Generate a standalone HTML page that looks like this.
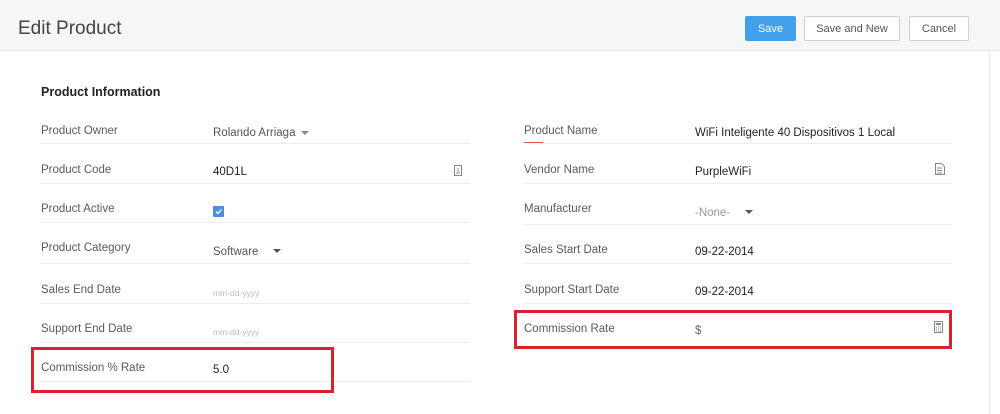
<!DOCTYPE html>
<html><head><style>
*{margin:0;padding:0;box-sizing:border-box}
body{width:1000px;height:414px;background:#fff;font-family:"Liberation Sans",sans-serif;position:relative;overflow:hidden;color:#333}
.hdr{position:absolute;left:0;top:0;width:1000px;height:51px;background:#f6f6f6;border-bottom:1px solid #e6e6e6}
.title{position:absolute;left:18px;top:18px;font-size:19px;color:#444}
.btn{position:absolute;top:16px;height:25px;border:1px solid #d0d0d0;background:#fff;font-size:11px;color:#555;text-align:center;line-height:24px;border-radius:2px}
.abs{position:absolute}
.lbl{position:absolute;font-size:11.5px;color:#5a5a5a;margin-top:1px}
.val{position:absolute;font-size:11.5px;color:#222;margin-top:1px}
.ln{position:absolute;height:1px;background:#ececec}
.ph{position:absolute;font-size:8.5px;color:#bbb;margin-top:1px}
.car{position:absolute;width:0;height:0;border-left:4px solid transparent;border-right:4px solid transparent;border-top:4px solid #555}
.red{position:absolute;border:3px solid #d7242c}
</style></head><body>
<div class="hdr"></div>
<div class="title">Edit Product</div>
<div class="btn" style="left:745px;width:51px;background:#42a0ea;border-color:#42a0ea;color:#fff">Save</div>
<div class="btn" style="left:804px;width:96px">Save and New</div>
<div class="btn" style="left:909px;width:60px">Cancel</div>
<div class="abs" style="left:989px;top:51px;width:1px;height:363px;background:#eee"></div>
<div class="abs" style="left:41px;top:85px;font-size:12.5px;font-weight:bold;color:#222">Product Information</div>

<div class="lbl" style="left:41px;top:124px">Product Owner</div><div class="val" style="left:213px;top:126px;color:#555">Rolando Arriaga</div><div class="car" style="left:301px;top:131px;border-top-color:#888"></div><div class="ln" style="left:40px;top:143px;width:430px"></div>
<div class="lbl" style="left:41px;top:163px">Product Code</div><div class="val" style="left:213px;top:165px">40D1L</div>
<svg class="abs" style="left:454px;top:165px" width="8" height="11"><rect x="0.5" y="0.5" width="7" height="10" fill="none" stroke="#888"/><line x1="4" y1="3" x2="4" y2="7" stroke="#888"/><line x1="2" y1="8" x2="6" y2="8" stroke="#888"/></svg>
<div class="ln" style="left:40px;top:183px;width:430px"></div>
<div class="lbl" style="left:41px;top:202px">Product Active</div>
<div class="abs" style="left:213px;top:206px;width:11px;height:11px;background:#4a90e2;border-radius:1px"></div>
<svg class="abs" style="left:213px;top:206px" width="11" height="11"><path d="M3 5.5l2 2 3.5-4" stroke="#fff" stroke-width="1.3" fill="none"/></svg>
<div class="ln" style="left:40px;top:222px;width:430px"></div>
<div class="lbl" style="left:41px;top:241px">Product Category</div><div class="val" style="left:213px;top:245px;color:#555">Software</div><div class="car" style="left:273px;top:249px"></div><div class="ln" style="left:40px;top:263px;width:430px"></div>
<div class="lbl" style="left:41px;top:283px">Sales End Date</div><div class="ph" style="left:213px;top:287px">mm-dd-yyyy</div><div class="ln" style="left:40px;top:303px;width:430px"></div>
<div class="lbl" style="left:41px;top:322px">Support End Date</div><div class="ph" style="left:213px;top:326px">mm-dd-yyyy</div><div class="ln" style="left:40px;top:342px;width:430px"></div>
<div class="lbl" style="left:41px;top:361px">Commission % Rate</div><div class="val" style="left:213px;top:363px">5.0</div><div class="ln" style="left:40px;top:381px;width:430px"></div>
<div class="red" style="left:31px;top:347px;width:303px;height:46px"></div>

<div class="lbl" style="left:524px;top:124px">Product Name</div><div class="abs" style="left:524px;top:142px;width:19px;height:1px;background:#d9534f"></div><div class="val" style="left:695px;top:126px">WiFi Inteligente 40 Dispositivos 1 Local</div><div class="ln" style="left:543px;top:143px;width:409px"></div>
<div class="lbl" style="left:524px;top:163px">Vendor Name</div><div class="val" style="left:695px;top:165px">PurpleWiFi</div>
<svg class="abs" style="left:935px;top:163px" width="10" height="12"><path d="M0.5 0.5h6l3 3v8h-9z" fill="none" stroke="#888"/><line x1="2" y1="5" x2="7" y2="5" stroke="#888"/><line x1="2" y1="7.5" x2="7" y2="7.5" stroke="#888"/><line x1="2" y1="10" x2="7" y2="10" stroke="#888"/></svg>
<div class="ln" style="left:523px;top:183px;width:429px"></div>
<div class="lbl" style="left:524px;top:202px">Manufacturer</div><div class="val" style="left:695px;top:206px;color:#999">-None-</div><div class="car" style="left:745px;top:210px"></div><div class="ln" style="left:523px;top:224px;width:429px"></div>
<div class="lbl" style="left:524px;top:243px">Sales Start Date</div><div class="val" style="left:695px;top:245px">09-22-2014</div><div class="ln" style="left:523px;top:263px;width:429px"></div>
<div class="lbl" style="left:524px;top:283px">Support Start Date</div><div class="val" style="left:695px;top:285px">09-22-2014</div><div class="ln" style="left:523px;top:303px;width:429px"></div>
<div class="lbl" style="left:524px;top:322px">Commission Rate</div><div class="val" style="left:695px;top:324px;color:#666">$</div>
<svg class="abs" style="left:934px;top:321px" width="9" height="12"><rect x="0.5" y="0.5" width="8" height="11" fill="none" stroke="#888"/><rect x="2" y="2" width="5" height="2" fill="#888"/><path d="M2 6h1M4 6h1M6 6h1M2 8h1M4 8h1M6 8h1M2 10h1M4 10h1M6 10h1" stroke="#888"/></svg>
<div class="red" style="left:514px;top:310px;width:438px;height:39px"></div>
</body></html>
